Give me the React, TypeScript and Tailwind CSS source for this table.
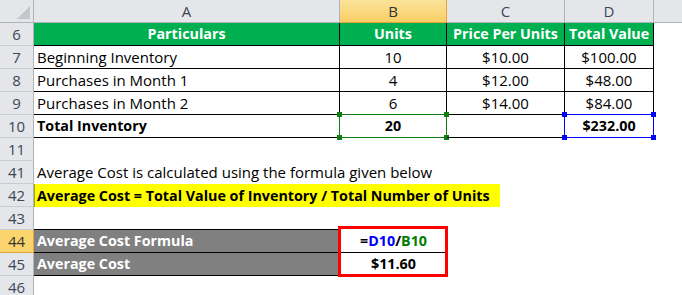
import React from "react";

const FONT = { fontFamily: '"Open Sans", "Liberation Sans", sans-serif' };

const GRID = "grid grid-cols-[34px_306px_107px_118px_89px_1fr]";

const RowHead = ({ n, active }: { n: number | string; active?: boolean }) => (
  <div
    className={
      "flex h-[23px] items-center justify-center border-r border-b text-[15px] " +
      (active
        ? "border-r-[#e3a53a] border-b-[#e3a53a] bg-[#fbd46d] text-[#333]"
        : "border-r-[#aeb4bb] border-b-[#c8ccd2] bg-[#e4e6ea] text-[#3c4658]")
    }
  >
    {n}
  </div>
);

const Handles = ({ color }: { color: string }) => (
  <>
    <span className={`absolute -left-[3px] -top-[3px] h-[5px] w-[5px] ${color}`} />
    <span className={`absolute -right-[3px] -top-[3px] h-[5px] w-[5px] ${color}`} />
    <span className={`absolute -left-[3px] -bottom-[3px] h-[5px] w-[5px] ${color}`} />
    <span className={`absolute -right-[3px] -bottom-[3px] h-[5px] w-[5px] ${color}`} />
  </>
);

const Cell = ({
  children,
  center,
  bold,
  className = "",
}: {
  children?: React.ReactNode;
  center?: boolean;
  bold?: boolean;
  className?: string;
}) => (
  <div
    className={
      "relative flex h-[23px] items-center whitespace-nowrap border-r border-b border-black px-[3px] text-black " +
      (center ? "justify-center " : "") +
      (bold ? "text-[14.3px] font-bold " : "text-[15px] ") +
      className
    }
  >
    {children}
  </div>
);

const Blank = ({ className = "" }: { className?: string }) => <div className={"h-[23px] " + className} />;

const rows = [
  { n: 7, a: "Beginning Inventory", b: "10", c: "$10.00", d: "$100.00" },
  { n: 8, a: "Purchases in Month 1", b: "4", c: "$12.00", d: "$48.00" },
  { n: 9, a: "Purchases in Month 2", b: "6", c: "$14.00", d: "$84.00" },
];

export default function App() {
  return (
    <div className="h-[295px] w-[682px] overflow-hidden bg-white" style={FONT}>
      {/* column headers */}
      <div className={GRID}>
        <div className="relative h-[23px] border-r border-b border-r-[#aeb4bb] border-b-[#aeb4bb] bg-[#e4e6ea]">
          <svg className="absolute right-[3px] bottom-[3px]" width="13" height="13" viewBox="0 0 13 13">
            <polygon points="13,0 13,13 0,13" fill="#c3c7cc" />
          </svg>
        </div>
        <div className="flex h-[23px] items-center justify-center border-r border-b border-[#aeb4bb] bg-[#e4e6ea] text-[15px] text-[#3c4658]">
          A
        </div>
        <div className="flex h-[23px] items-center justify-center border-r border-b border-r-[#e3a53a] border-b-[#e3a53a] bg-gradient-to-b from-[#fbe39a] to-[#f9cf64] text-[15px] text-[#333]">
          B
        </div>
        <div className="flex h-[23px] items-center justify-center border-r border-b border-[#aeb4bb] bg-[#e4e6ea] text-[15px] text-[#3c4658]">
          C
        </div>
        <div className="flex h-[23px] items-center justify-center border-r border-b border-[#aeb4bb] bg-[#e4e6ea] text-[15px] text-[#3c4658]">
          D
        </div>
        <div className="h-[23px] border-b border-[#aeb4bb] bg-[#e4e6ea]" />
      </div>

      {/* row 6: table header */}
      <div className={GRID}>
        <RowHead n={6} />
        {["Particulars", "Units", "Price Per Units", "Total Value"].map((t) => (
          <Cell key={t} center bold className="bg-[#00b050] !px-[2px] !text-white">
            {t}
          </Cell>
        ))}
        <Blank />
      </div>

      {rows.map((r) => (
        <div key={r.n} className={GRID}>
          <RowHead n={r.n} />
          <Cell>{r.a}</Cell>
          <Cell center>{r.b}</Cell>
          <Cell center>{r.c}</Cell>
          <Cell center>{r.d}</Cell>
          <Blank />
        </div>
      ))}

      {/* row 10: totals */}
      <div className={GRID}>
        <RowHead n={10} />
        <Cell bold>Total Inventory</Cell>
        <Cell center bold>
          <span className="pointer-events-none absolute -left-px -top-px -right-px -bottom-px border border-[#0f7d12]">
            <Handles color="bg-[#0f7d12]" />
          </span>
          20
        </Cell>
        <Cell />
        <Cell center bold>
          <span className="pointer-events-none absolute -left-px -top-px -right-px -bottom-px border border-[#0000ff]">
            <Handles color="bg-[#0000ff]" />
          </span>
          $232.00
        </Cell>
        <Blank />
      </div>

      <div className={GRID}>
        <RowHead n={11} />
        <Blank className="col-span-5" />
      </div>

      <div className={GRID}>
        <RowHead n={41} />
        <div className="flex h-[23px] items-center overflow-visible whitespace-nowrap px-[3px] text-[15px] text-black">
          Average Cost is calculated using the formula given below
        </div>
        <Blank className="col-span-4" />
      </div>

      <div className={GRID}>
        <RowHead n={42} />
        <div className="col-span-5 flex h-[23px]">
          <div className="flex h-[23px] w-[466px] items-center whitespace-nowrap border-l border-[#a8a800] bg-[#ffff00] px-[2px] text-[14.3px] font-bold text-black">
            Average Cost = Total Value of Inventory / Total Number of Units
          </div>
        </div>
      </div>

      <div className={GRID}>
        <RowHead n={43} />
        <Blank className="border-b border-black" />
        <Blank className="col-span-4" />
      </div>

      {/* rows 44-45: result block */}
      <div className="relative">
        <div className={GRID}>
          <RowHead n={44} active />
          <Cell bold className="bg-[#808080] !text-white">
            Average Cost Formula
          </Cell>
          <Cell center bold className="!border-r-0">
            <span>
              =<span className="text-[#0000ff]">D10</span>/<span className="text-[#008000]">B10</span>
            </span>
          </Cell>
          <Blank className="col-span-3" />
        </div>
        <div className={GRID}>
          <RowHead n={45} />
          <Cell bold className="bg-[#808080] !text-white">
            Average Cost
          </Cell>
          <Cell center bold className="!border-r-0">
            $11.60
          </Cell>
          <Blank className="col-span-3" />
        </div>
        <div className="pointer-events-none absolute left-[338px] top-[-4px] h-[51px] w-[110px] border-[3px] border-[#ff0000]" />
      </div>

      <div className={GRID}>
        <RowHead n={46} />
        <Blank className="col-span-5" />
      </div>
    </div>
  );
}
